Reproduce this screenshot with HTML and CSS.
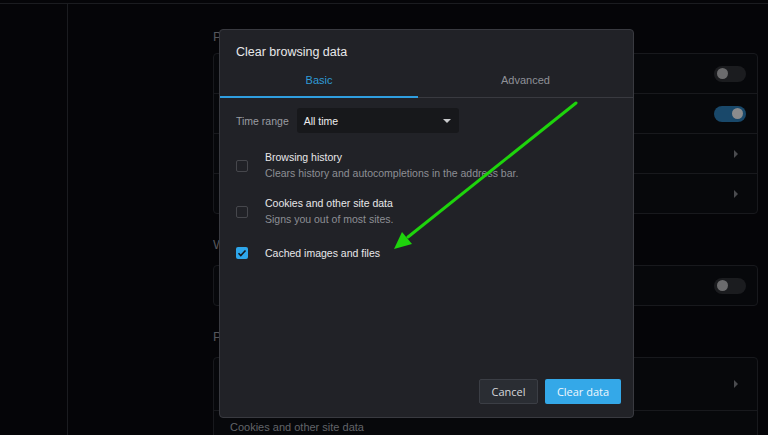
FILE: index.html
```html
<!DOCTYPE html>
<html lang="en">
<head>
    <meta charset="UTF-8">
    <meta name="viewport" content="width=device-width, initial-scale=1.0">
    <title>Settings - Clear browsing data</title>
    <link rel="stylesheet" href="styles.css">
</head>
<body>
    <div class="topbar"></div>
    <div class="layout">
        <div class="sidebar"></div>
        <div class="main">
            <h3 class="section-title">Privacy</h3>
            <div class="card">
                <div class="row"><span class="toggle"></span></div>
                <div class="row"><span class="toggle on"></span></div>
                <div class="row"><span class="chevron"></span></div>
                <div class="row"><span class="chevron"></span></div>
            </div>
            <h3 class="section-title second">WebRTC</h3>
            <div class="card">
                <div class="row"><span class="toggle"></span></div>
            </div>
            <h3 class="section-title third">Privacy and security</h3>
            <div class="card">
                <div class="row tall"><span class="chevron"></span></div>
                <div class="row label-row">Cookies and other site data</div>
            </div>
        </div>
    </div>

    <div class="dialog">
        <div class="dialog-title">Clear browsing data</div>
        <div class="tabs">
            <div class="tab active">Basic</div>
            <div class="tab">Advanced</div>
        </div>
        <div class="dialog-body">
            <div class="time-range">
                <span class="time-label">Time range</span>
                <div class="select">
                    <span>All time</span>
                    <span class="select-arrow"></span>
                </div>
            </div>
            <div class="option">
                <span class="checkbox"></span>
                <div>
                    <div class="option-title">Browsing history</div>
                    <div class="option-desc">Clears history and autocompletions in the address bar.</div>
                </div>
            </div>
            <div class="option">
                <span class="checkbox"></span>
                <div>
                    <div class="option-title">Cookies and other site data</div>
                    <div class="option-desc">Signs you out of most sites.</div>
                </div>
            </div>
            <div class="option single">
                <span class="checkbox checked">
                    <svg viewBox="0 0 12 12"><path d="M2.5 6.2l2.3 2.3 4.7-5"/></svg>
                </span>
                <div class="option-title">Cached images and files</div>
            </div>
        </div>
        <div class="dialog-footer">
            <button class="btn cancel">Cancel</button>
            <button class="btn primary">Clear data</button>
        </div>
    </div>

    <svg class="arrow" width="768" height="435" viewBox="0 0 768 435">
        <line x1="576" y1="103" x2="408" y2="237" stroke="#1ed40c" stroke-width="3" stroke-linecap="round"/>
        <polygon points="394,249 402,232 412,244" fill="#1ed40c"/>
    </svg>
</body>
</html>
```

FILE: styles.css
```css
body, html {
    margin: 0;
    padding: 0;
    height: 100%;
    overflow: hidden;
    font-family: "Liberation Sans", Arial, sans-serif;
    background-color: #050508;
    color: #e4e4e6;
}
.topbar {
    height: 3px;
    border-bottom: 1px solid #1b1c20;
}
.layout {
    display: flex;
    height: 431px;
}
.sidebar {
    width: 67px;
    border-right: 1px solid #1b1c20;
}
.main {
    flex: 1;
    padding-left: 145px;
    padding-right: 10px;
}
.section-title {
    margin: 0;
    padding-top: 25px;
    height: 24px;
    font-size: 13px;
    font-weight: normal;
    color: #55575c;
}
.section-title.second {
    padding-top: 23px;
    height: 28px;
}
.section-title.third {
    padding-top: 23px;
    height: 28px;
}
.card {
    border: 1px solid #18191d;
    border-radius: 4px;
    background-color: #07080b;
}
.row {
    height: 39px;
    display: flex;
    align-items: center;
    justify-content: flex-end;
    padding-right: 11px;
    border-top: 1px solid #18191d;
}
.row:first-child {
    border-top: none;
}
.row.tall {
    height: 52px;
}
.label-row {
    justify-content: flex-start;
    padding-left: 16px;
    font-size: 11px;
    color: #626469;
    height: 32px;
}
.toggle {
    position: relative;
    width: 32px;
    height: 16px;
    border-radius: 8px;
    background-color: #1b1c1f;
}
.toggle::after {
    content: "";
    position: absolute;
    top: 2px;
    left: 3px;
    width: 11px;
    height: 11px;
    border-radius: 50%;
    background-color: #6b6b6d;
}
.toggle.on {
    background-color: #19486a;
}
.toggle.on::after {
    left: auto;
    right: 3px;
    background-color: #8a8b8d;
}
.chevron {
    width: 0;
    height: 0;
    margin-right: 8px;
    border-top: 4px solid transparent;
    border-bottom: 4px solid transparent;
    border-left: 4px solid #4a4b4f;
}

.dialog {
    position: absolute;
    left: 219px;
    top: 29px;
    width: 413px;
    height: 387px;
    background-color: #212227;
    border: 1px solid #393a40;
    border-radius: 4px;
    display: flex;
    flex-direction: column;
}
.dialog-title {
    padding: 15px 16px 0;
    height: 18px;
    font-size: 12.5px;
    color: #e8e8ea;
}
.tabs {
    display: flex;
    height: 34px;
    border-bottom: 1px solid #393a40;
}
.tab {
    flex: 1;
    display: flex;
    align-items: center;
    justify-content: center;
    font-size: 11px;
    color: #8f9197;
    border-bottom: 2px solid transparent;
    margin-bottom: -1px;
}
.tab.active {
    flex: none;
    width: 198px;
    color: #2f9bd6;
    border-bottom-color: #2f9ee0;
}
.dialog-body {
    flex: 1;
    padding: 10px 16px 0;
}
.time-range {
    display: flex;
    align-items: center;
    gap: 8px;
}
.time-label {
    font-size: 10.5px;
    color: #9a9ca2;
}
.select {
    width: 148px;
    height: 25px;
    padding: 0 7px;
    display: flex;
    align-items: center;
    justify-content: space-between;
    background-color: #17181b;
    border-radius: 3px;
    font-size: 10.5px;
    color: #eeeeef;
}
.select-arrow {
    width: 0;
    height: 0;
    margin-right: 1px;
    border-left: 4px solid transparent;
    border-right: 4px solid transparent;
    border-top: 4px solid #c9cacc;
}
.option {
    display: flex;
    align-items: center;
    gap: 17px;
    margin-top: 16px;
}
.option + .option {
    margin-top: 14px;
}
.option.single {
    margin-top: 18px;
}
.checkbox {
    width: 10px;
    height: 10px;
    border: 1px solid #46474c;
    border-radius: 2px;
    flex: none;
    margin-top: 2px;
}
.checkbox.checked {
    margin-top: 0;
    width: 12px;
    height: 12px;
    border: none;
    background-color: #2ea6ea;
}
.checkbox svg {
    display: block;
    width: 12px;
    height: 12px;
    fill: none;
    stroke: #15161a;
    stroke-width: 1.6;
}
.option-title {
    font-size: 10.5px;
    color: #e8e8ea;
    line-height: 16px;
}
.option-desc {
    font-size: 10.5px;
    color: #8d8f95;
    line-height: 16px;
}
.dialog-footer {
    display: flex;
    justify-content: flex-end;
    gap: 7px;
    padding: 0 12px 13px;
}
.btn {
    height: 25px;
    border-radius: 2px;
    font-family: "Open Sans", sans-serif;
    font-size: 11px;
    padding: 0;
    cursor: pointer;
}
.btn.cancel {
    width: 59px;
    background-color: #2a2d33;
    border: 1px solid #3b3e45;
    color: #d6d7da;
}
.btn.primary {
    width: 76px;
    background-color: #34a8e8;
    border: none;
    color: #eef7fd;
}
.arrow {
    position: absolute;
    left: 0;
    top: 0;
    pointer-events: none;
}
```
